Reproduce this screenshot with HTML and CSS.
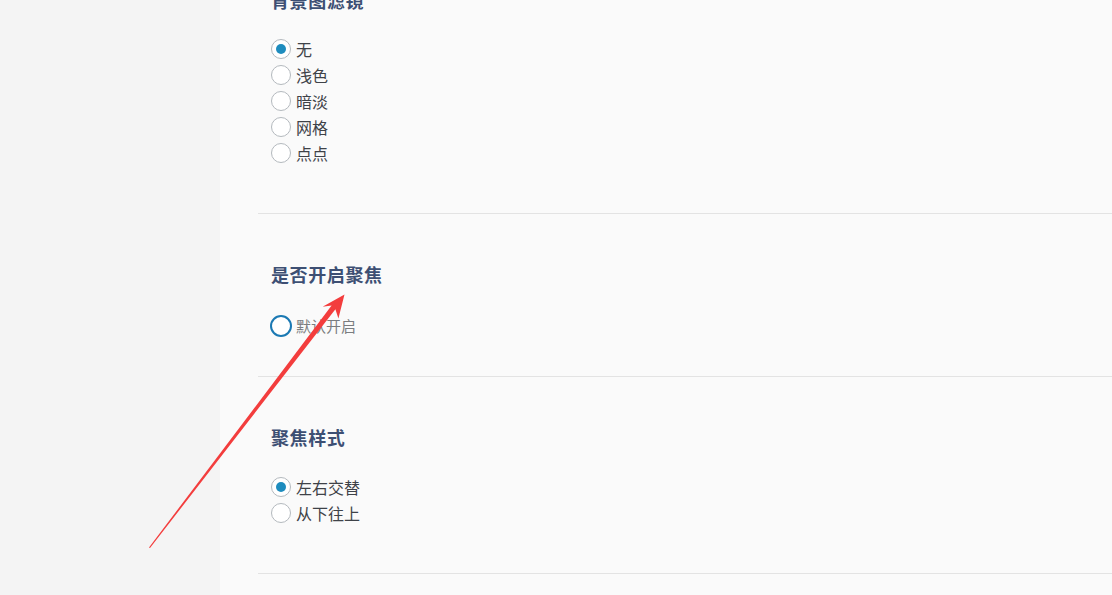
FILE: index.html
```html
<!DOCTYPE html>
<html lang="zh-CN">
<head>
<meta charset="utf-8">
<title>设置</title>
<link rel="stylesheet" href="styles.css">
</head>
<body>
<div class="layout">
  <aside class="sidebar"></aside>
  <main class="main">
    <section class="section first">
      <h2 class="title">背景图滤镜</h2>
      <ul class="options">
        <li class="option"><span class="radio checked"></span><span class="label">无</span></li>
        <li class="option"><span class="radio"></span><span class="label">浅色</span></li>
        <li class="option"><span class="radio"></span><span class="label">暗淡</span></li>
        <li class="option"><span class="radio"></span><span class="label">网格</span></li>
        <li class="option"><span class="radio"></span><span class="label">点点</span></li>
      </ul>
    </section>
    <section class="section compact">
      <h2 class="title">是否开启聚焦</h2>
      <ul class="options">
        <li class="option"><span class="radio focus"></span><span class="label muted">默认开启</span></li>
      </ul>
    </section>
    <section class="section">
      <h2 class="title">聚焦样式</h2>
      <ul class="options">
        <li class="option"><span class="radio checked"></span><span class="label">左右交替</span></li>
        <li class="option"><span class="radio"></span><span class="label">从下往上</span></li>
      </ul>
    </section>
  </main>
</div>
<svg class="annotation" width="1112" height="595" viewBox="0 0 1112 595">
  <polygon fill="#f33d3d" points="149,547.5 331.6,305.6 322.6,306.8 344.5,294.5 338.4,318.4 335.4,309.2 150,548"/>
</svg>
</body>
</html>
```
FILE: styles.css
```css
* { box-sizing: border-box; }
html, body {
  margin: 0;
  padding: 0;
  height: 100%;
  overflow: hidden;
}
body {
  font-family: "Liberation Serif", "Noto Sans CJK SC", serif;
  background: #fafafa;
  position: relative;
}
.layout {
  display: flex;
  min-height: 595px;
}
.sidebar {
  width: 220px;
  flex: none;
  background: #f4f4f4;
}
.main {
  flex: 1;
  background: #fafafa;
  padding-left: 38px;
}
.section {
  padding: 48px 0 47px 13px;
  border-bottom: 1px solid #e3e3e3;
}
.section.first {
  margin-top: -60px;
  padding-bottom: 47px;
}
.section.first .options {
  margin-top: 24px;
}
.section.compact {
  padding-bottom: 37px;
}
.section.compact .options {
  margin-top: 27px;
}
.title {
  margin: 0;
  font-family: "Noto Sans CJK SC", sans-serif;
  font-size: 18px;
  font-weight: 700;
  line-height: 24px;
  letter-spacing: 0.6px;
  color: #3d4f73;
}
.options {
  list-style: none;
  margin: 25px 0 0;
  padding: 0;
}
.option {
  display: flex;
  align-items: center;
  height: 26px;
}
.radio {
  width: 20px;
  height: 20px;
  flex: none;
  border: 1px solid #b4b9be;
  border-radius: 50%;
  background: #fff;
  display: flex;
  align-items: center;
  justify-content: center;
  margin-right: 5px;
}
.radio.checked::after {
  content: "";
  width: 10px;
  height: 10px;
  border-radius: 50%;
  background: #1e8cbe;
}
.radio.focus {
  width: 22px;
  height: 22px;
  margin-left: -1px;
  margin-right: 4px;
  border: 2.5px solid #1b79b3;
}
.label {
  font-family: "Noto Sans CJK SC", sans-serif;
  font-size: 16px;
  line-height: 26px;
  color: #3e4248;
}
.label.muted {
  color: #7a7d80;
  font-size: 15px;
}
.annotation {
  position: absolute;
  left: 0;
  top: 0;
  pointer-events: none;
}
```
